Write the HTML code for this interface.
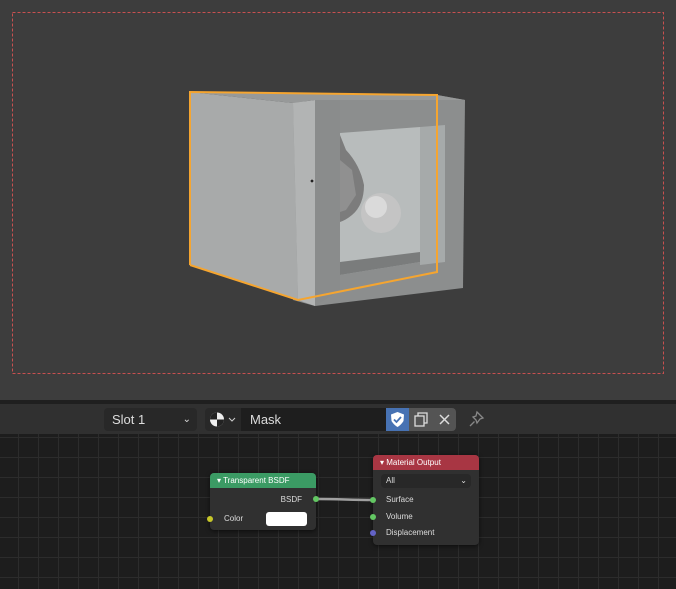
<!DOCTYPE html><html><head><style>
body{margin:0;width:676px;height:589px;overflow:hidden;background:#3d3d3d;font-family:"Liberation Sans","DejaVu Sans",sans-serif;position:relative}
.a{position:absolute}
.hdr{position:absolute;left:0;top:404px;width:676px;height:30px;background:#303030}
.ne{position:absolute;left:0;top:434px;width:676px;height:155px;background-color:#1d1d1d;background-image:linear-gradient(#2c2c2c 1px,transparent 1px),linear-gradient(90deg,#2c2c2c 1px,transparent 1px);background-size:20px 20px;background-position:-2px 3px}
.node{position:absolute;background:#303030;border-radius:4px;box-shadow:0 1px 4px rgba(0,0,0,.6);font-size:8px;color:#ddd}
.nh{height:15px;border-radius:4px 4px 0 0;color:#fff;font-size:8px;line-height:15px;padding-left:7px}
.sock{position:absolute;width:6px;height:6px;border-radius:50%}
.t{position:absolute;font-size:8px;color:#ddd}
</style></head><body>
<svg class="a" style="left:0;top:0" width="676" height="404">
<rect x="0" y="0" width="676" height="400" fill="#3d3d3d"/>
<rect x="12.5" y="12.5" width="651" height="361" fill="none" stroke="#c85050" stroke-dasharray="3,2" stroke-width="1"/>
<rect x="0" y="400" width="676" height="4" fill="#1f1f1f"/>
<polygon points="293,102 437,95 465,100 463,288 315,306 293,300" fill="#8c8e8e"/>
<polygon points="190,92 437,95 465,100 315,100 293,103" fill="#979999"/>
<polygon points="340,133 420,127 420,262 340,275" fill="#b8bcbc"/>
<polygon points="340,262 420,252 420,262 340,275" fill="#7a7c7c"/>
<path d="M340 135 L346 150 Q360 165 364 185 Q364 205 352 215 Q346 220 340 222 Z" fill="#7c7c7c"/>
<path d="M340 160 L352 170 L356 195 L346 210 L340 212 Z" fill="#909090"/>
<circle cx="381" cy="213" r="20" fill="#c4c4c4"/>
<circle cx="376" cy="207" r="11" fill="#dadada"/>
<polygon points="420,127 445,125 445,262 420,265" fill="#a9adad" opacity=".9"/>
<polygon points="315,100 340,100 340,290 315,306" fill="#8a8c8c"/>
<polygon points="190,92 293,103 298,300 190,265" fill="#a8aaaa"/>
<polygon points="293,103 315,100 315,306 298,300" fill="#b2b4b4"/>
<polyline points="190,265 190,92 437,95 437,272 298,300 190,265" fill="none" stroke="#f5a530" stroke-width="2"/>
<circle cx="312" cy="181" r="1.8" fill="#222" stroke="#ddd" stroke-width=".5"/>
</svg>
<div class="hdr">
<div class="a" style="left:104px;top:4px;width:93px;height:23px;background:#282828;border-radius:4px;color:#ddd;font-size:13px;line-height:23px;text-indent:8px">Slot 1<span class="a" style="right:6px;top:0;font-size:10px">⌄</span></div>
<div class="a" style="left:205px;top:4px;width:36px;height:23px;background:#282828;border-radius:4px 0 0 4px"><svg width="36" height="23"><circle cx="12" cy="11.5" r="7" fill="#eee"/><path d="M12 11.5 L12 4.5 A7 7 0 0 0 5 11.5Z M12 11.5 L19 11.5 A7 7 0 0 1 12 18.5Z" fill="#222"/><path d="M24 10 l3 3 l3 -3" stroke="#ccc" fill="none"/></svg></div>
<div class="a" style="left:241px;top:4px;width:145px;height:23px;background:#1e1e1e;color:#ddd;font-size:13px;line-height:23px;text-indent:9px">Mask</div>
<div class="a" style="left:386px;top:4px;width:23px;height:23px;background:#4772b3"><svg width="23" height="23"><path d="M11.5 4 L18 6.5 L17.5 13 Q15 17 11.5 19 Q8 17 5.5 13 L5 6.5Z" fill="#fff"/><path d="M8 11.5 l2.5 2.5 l4.5 -5" stroke="#4772b3" stroke-width="1.8" fill="none"/></svg></div>
<div class="a" style="left:409px;top:4px;width:24px;height:23px;background:#545454"><svg width="24" height="23"><rect x="6" y="8" width="9" height="10" fill="none" stroke="#ddd" stroke-width="1.3"/><path d="M9 8 V5 H18 V15 H15" fill="none" stroke="#ddd" stroke-width="1.3"/></svg></div>
<div class="a" style="left:433px;top:4px;width:23px;height:23px;background:#545454;border-radius:0 4px 4px 0"><svg width="23" height="23"><path d="M7 7 L16 16 M16 7 L7 16" stroke="#ddd" stroke-width="1.5"/></svg></div>
<svg class="a" style="left:465px;top:4px" width="22" height="23"><path d="M12 4 L18 10 L15 11 L12 15 L11 12 L8 9 L11 8Z M9.5 13.5 L5 18" fill="none" stroke="#888" stroke-width="1.3"/></svg>
</div>
<div class="ne"></div>
<svg class="a" style="left:0;top:434px" width="676" height="155"><path d="M316 65 C340 65 350 66 373 66" stroke="#a0a0a0" stroke-width="2.5" fill="none"/></svg>
<div class="node" style="left:210px;top:473px;width:106px;height:57px"><div class="nh" style="background:#3b9b64">▾ Transparent BSDF</div>
<div class="t" style="right:14px;top:22px">BSDF</div>
<div class="t" style="left:14px;top:41px">Color</div>
<div class="a" style="left:56px;top:39px;width:41px;height:14px;background:#fff;border-radius:3px"></div>
<div class="sock" style="left:103px;top:23px;background:#63c763"></div>
<div class="sock" style="left:-3px;top:43px;background:#c7c729"></div></div>
<div class="node" style="left:373px;top:455px;width:106px;height:90px"><div class="nh" style="background:#a83643">▾ Material Output</div>
<div class="a" style="left:8px;top:19px;width:90px;height:14px;background:#282828;border-radius:4px;color:#ddd;font-size:8px;line-height:14px;text-indent:5px">All<span class="a" style="right:4px;top:0">⌄</span></div>
<div class="t" style="left:13px;top:40px">Surface</div>
<div class="t" style="left:13px;top:57px">Volume</div>
<div class="t" style="left:13px;top:73px">Displacement</div>
<div class="sock" style="left:-3px;top:42px;background:#63c763"></div>
<div class="sock" style="left:-3px;top:59px;background:#63c763"></div>
<div class="sock" style="left:-3px;top:75px;background:#6363c7"></div></div>
</body></html>
